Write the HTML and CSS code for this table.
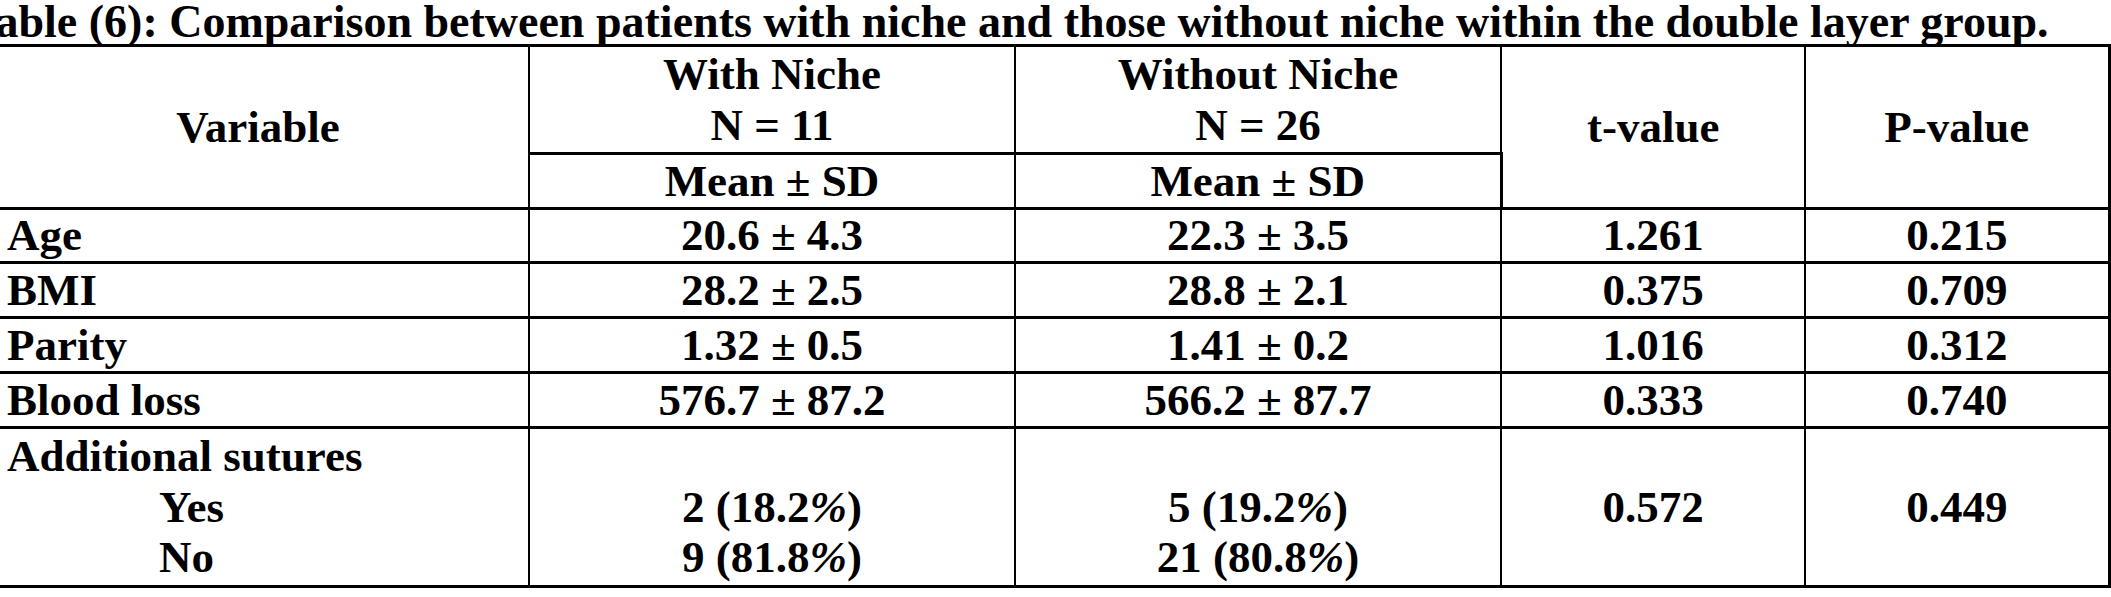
FILE: index.html
```html
<!DOCTYPE html>
<html>
<head>
  <title>Table 6 - Niche comparison</title>
  <link rel="stylesheet" href="styles.css">
</head>
<body>
  <p class="caption">Table (6): Comparison between patients with niche and those without niche within the double layer group.</p>

  <table class="stats">
    <colgroup>
      <col class="col-var">
      <col class="col-group">
      <col class="col-group">
      <col class="col-test">
      <col class="col-test">
    </colgroup>
    <thead>
      <tr class="group-row">
        <th rowspan="2">Variable</th>
        <th>With Niche<br>N = 11</th>
        <th>Without Niche<br>N = 26</th>
        <th rowspan="2">t-value</th>
        <th rowspan="2">P-value</th>
      </tr>
      <tr class="unit-row">
        <th>Mean ± SD</th>
        <th>Mean ± SD</th>
      </tr>
    </thead>
    <tbody>
      <tr class="first-row">
        <td class="name">Age</td>
        <td>20.6 ± 4.3</td>
        <td>22.3 ± 3.5</td>
        <td>1.261</td>
        <td>0.215</td>
      </tr>
      <tr>
        <td class="name">BMI</td>
        <td>28.2 ± 2.5</td>
        <td>28.8 ± 2.1</td>
        <td>0.375</td>
        <td>0.709</td>
      </tr>
      <tr>
        <td class="name">Parity</td>
        <td>1.32 ± 0.5</td>
        <td>1.41 ± 0.2</td>
        <td>1.016</td>
        <td>0.312</td>
      </tr>
      <tr>
        <td class="name">Blood loss</td>
        <td>576.7 ± 87.2</td>
        <td>566.2 ± 87.7</td>
        <td>0.333</td>
        <td>0.740</td>
      </tr>
      <tr class="multi-row">
        <td class="name">Additional sutures<span class="sub">Yes</span><span class="sub">No</span></td>
        <td><br>2 (18.2<span class="pct">%</span>)<br>9 (81.8<span class="pct">%</span>)</td>
        <td><br>5 (19.2<span class="pct">%</span>)<br>21 (80.8<span class="pct">%</span>)</td>
        <td>0.572</td>
        <td>0.449</td>
      </tr>
    </tbody>
  </table>
</body>
</html>
```

FILE: styles.css
```css
body {
  margin: 0;
  background-color: white;
  color: black;
  font-family: "Liberation Serif", "Times New Roman", serif;
  font-weight: bold;
  font-size: 45px;
  overflow: hidden;
}

/* the left edge of the scan crops the "T" */
.caption {
  margin: 0 0 0 -31px;
  height: 44px;
  line-height: 44px;
  font-size: 46px;
  white-space: nowrap;
}

.stats {
  margin-left: -14px;
  border-collapse: collapse;
  table-layout: fixed;
  width: 2122px;
}

.col-var {
  width: 542px;
}

.col-group {
  width: 486px;
}

.col-test {
  width: 304px;
}

.stats th,
.stats td {
  border-top: 3px solid black;
  border-bottom: 3px solid black;
  border-left: 2px solid black;
  border-right: 2px solid black;
  padding: 0;
  text-align: center;
  vertical-align: middle;
  line-height: 50.5px;
  font-weight: bold;
}

.stats tr > :last-child {
  border-right-width: 3px;
}

.unit-row th {
  border-top-width: 2px;
}

.stats .name {
  text-align: left;
  padding-left: 19px;
}

.group-row {
  height: 108px;
}

.unit-row {
  height: 55px;
}

.stats tbody tr {
  height: 55px;
}

.stats tbody tr.first-row {
  height: 54px;
}

.stats tbody tr.multi-row {
  height: 159px;
}

.sub {
  display: block;
  padding-left: 152px;
}

.pct {
  font-style: italic;
}
```
